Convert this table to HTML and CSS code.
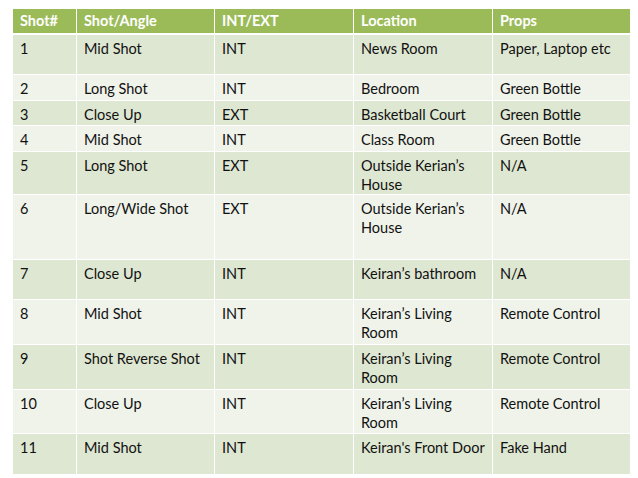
FILE: index.html
```html
<!DOCTYPE html>
<html>
<head>
<meta charset="utf-8">
<link rel="stylesheet" href="styles.css">
</head>
<body>
<table class="shots">
  <colgroup>
    <col class="c1"><col class="c2"><col class="c3"><col class="c4"><col class="c5">
  </colgroup>
  <thead>
    <tr class="head"><th>Shot#</th><th>Shot/Angle</th><th>INT/EXT</th><th>Location</th><th>Props</th></tr>
  </thead>
  <tbody>
    <tr class="r1"><td>1</td><td>Mid Shot</td><td>INT</td><td>News Room</td><td>Paper, Laptop etc</td></tr>
    <tr class="r2"><td>2</td><td>Long Shot</td><td>INT</td><td>Bedroom</td><td>Green Bottle</td></tr>
    <tr class="r3"><td>3</td><td>Close Up</td><td>EXT</td><td>Basketball Court</td><td>Green Bottle</td></tr>
    <tr class="r4"><td>4</td><td>Mid Shot</td><td>INT</td><td>Class Room</td><td>Green Bottle</td></tr>
    <tr class="r5"><td>5</td><td>Long Shot</td><td>EXT</td><td>Outside Kerian’s House</td><td>N/A</td></tr>
    <tr class="r6"><td>6</td><td>Long/Wide Shot</td><td>EXT</td><td>Outside Kerian’s House</td><td>N/A</td></tr>
    <tr class="r7"><td>7</td><td>Close Up</td><td>INT</td><td>Keiran’s bathroom</td><td>N/A</td></tr>
    <tr class="r8"><td>8</td><td>Mid Shot</td><td>INT</td><td>Keiran’s Living Room</td><td>Remote Control</td></tr>
    <tr class="r9"><td>9</td><td>Shot Reverse Shot</td><td>INT</td><td>Keiran’s Living Room</td><td>Remote Control</td></tr>
    <tr class="r10"><td>10</td><td>Close Up</td><td>INT</td><td>Keiran’s Living Room</td><td>Remote Control</td></tr>
    <tr class="r11"><td>11</td><td>Mid Shot</td><td>INT</td><td>Keiran's Front Door</td><td>Fake Hand</td></tr>
  </tbody>
</table>
</body>
</html>
```
FILE: styles.css
```css
html, body {
  margin: 0;
  padding: 0;
  background: #ffffff;
}
body {
  padding: 8px 0 0 12px;
  font-family: Lato, "Open Sans", sans-serif;
}
.shots {
  border-collapse: collapse;
  table-layout: fixed;
  width: 618px;
  font-size: 14.5px;
  line-height: 19px;
  color: #111111;
}
.c1 { width: 64px; }
.c2 { width: 138px; }
.c3 { width: 139px; }
.c4 { width: 139px; }
.c5 { width: 138px; }
.shots th, .shots td {
  border: 1px solid #ffffff;
  padding: 4px 2px 0 7px;
  vertical-align: top;
  text-align: left;
  overflow: hidden;
}
.shots th {
  background: #9bbb59;
  color: #ffffff;
  font-weight: bold;
  height: 22px;
  padding-top: 2px;
  border-bottom: 2px solid #ffffff;
}
.shots tbody tr:nth-child(odd) td { background: #dee7d1; }
.shots tbody tr:nth-child(even) td { background: #eff3ea; }
.r1 td { height: 35px; }
.r2 td { height: 21px; }
.r3 td { height: 20px; }
.r4 td { height: 21px; }
.r5 td { height: 38px; }
.r6 td { height: 60px; }
.r7 td { height: 35px; }
.r8 td { height: 40px; }
.r9 td { height: 40px; }
.r10 td { height: 39px; }
.r11 td { height: 36px; }
```
